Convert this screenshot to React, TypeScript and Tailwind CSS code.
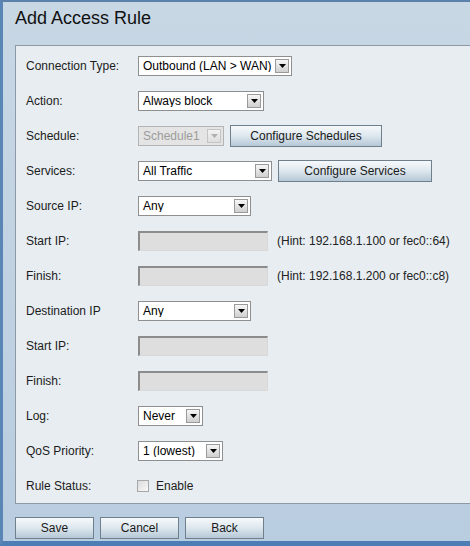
import React from "react";

const font = { fontFamily: '"Liberation Sans", Arial, sans-serif' };

function Arrow({ disabled }: { disabled?: boolean }) {
  return (
    <div
      className={`mr-[2px] flex h-[14px] w-[14px] shrink-0 items-center justify-center border bg-gradient-to-b ${
        disabled ? "border-[#c4c4c4] from-[#f2f2f2] to-[#dedede]" : "border-[#9a9a9a] from-[#f7f7f7] to-[#cfcfcf]"
      }`}
    >
      <svg width="7" height="4" viewBox="0 0 7 4">
        <path d="M0 0h7L3.5 4z" fill={disabled ? "#b0b0b0" : "#000"} />
      </svg>
    </div>
  );
}

function Select({ value, w, disabled }: { value: string; w: string; disabled?: boolean }) {
  return (
    <div
      className={`flex h-[20px] items-center border ${w} ${
        disabled ? "border-[#b4b4b4] bg-[#e4e4e4] text-[#9c9c9c]" : "border-[#8f8f8f] bg-white text-black"
      }`}
    >
      <span className="flex-1 truncate pl-[4px] text-[12px] leading-none">{value}</span>
      <Arrow disabled={disabled} />
    </div>
  );
}

function Button({ label, w }: { label: string; w: string }) {
  return (
    <div
      className={`flex h-[22px] items-center justify-center border border-[#6f7f8c] bg-gradient-to-b from-[#f6f9fb] via-[#dde7ee] to-[#b5c7d6] text-[12px] text-[#1a1a1a] ${w}`}
    >
      {label}
    </div>
  );
}

function IpInput() {
  return (
    <div className="h-[20px] w-[130px] border-t-2 border-l-2 border-r border-b border-t-[#8c8c8c] border-l-[#8c8c8c] border-r-[#d8d8d8] border-b-[#d8d8d8] bg-[#dedede]" />
  );
}

function Row({ label, children }: { label: string; children: React.ReactNode }) {
  return (
    <div className="flex h-[35px] items-center">
      <div className="w-[112px] shrink-0 text-[12px] text-[#1c1c1c]">{label}</div>
      <div className="flex items-center gap-[6px]">{children}</div>
    </div>
  );
}

export default function App() {
  return (
    <div
      style={font}
      className="flex h-[546px] w-[470px] flex-col overflow-hidden border-t-2 border-l-[3px] border-b-[5px] border-t-[#5b80aa] border-l-[#5a86b6] border-b-[#4d7db5] bg-gradient-to-b from-[#c8d7e4] to-[#b9cde0]"
    >
      <h1 className="pl-[12px] pt-[5px] text-[18px] leading-[22px] text-[#111]">Add Access Rule</h1>

      <div className="ml-[12px] mt-[16px] border border-r-0 border-[#8d9aa5] bg-[#e7edf1] pl-[10px] pt-[2px]">
        <Row label="Connection Type:">
          <Select value="Outbound (LAN > WAN)" w="w-[154px]" />
        </Row>
        <Row label="Action:">
          <Select value="Always block" w="w-[126px]" />
        </Row>
        <Row label="Schedule:">
          <Select value="Schedule1" w="w-[86px]" disabled />
          <Button label="Configure Schedules" w="w-[152px]" />
        </Row>
        <Row label="Services:">
          <Select value="All Traffic" w="w-[134px]" />
          <Button label="Configure Services" w="w-[154px]" />
        </Row>
        <Row label="Source IP:">
          <Select value="Any" w="w-[113px]" />
        </Row>
        <Row label="Start IP:">
          <IpInput />
          <span className="ml-[3px] text-[12px] text-[#222]">(Hint: 192.168.1.100 or fec0::64)</span>
        </Row>
        <Row label="Finish:">
          <IpInput />
          <span className="ml-[3px] text-[12px] text-[#222]">(Hint: 192.168.1.200 or fec0::c8)</span>
        </Row>
        <Row label="Destination IP">
          <Select value="Any" w="w-[113px]" />
        </Row>
        <Row label="Start IP:">
          <IpInput />
        </Row>
        <Row label="Finish:">
          <IpInput />
        </Row>
        <Row label="Log:">
          <Select value="Never" w="w-[65px]" />
        </Row>
        <Row label="QoS Priority:">
          <Select value="1 (lowest)" w="w-[85px]" />
        </Row>
        <Row label="Rule Status:">
          <div className="-ml-[1px] h-[12px] w-[12px] border border-[#a8a8a8] bg-gradient-to-br from-[#dcdcdc] to-[#f8f8f8]" />
          <span className="ml-[1px] text-[12px] text-[#1c1c1c]">Enable</span>
        </Row>
      </div>

      <div className="ml-[12px] mt-[13px] flex gap-[6px]">
        <Button label="Save" w="w-[79px]" />
        <Button label="Cancel" w="w-[79px]" />
        <Button label="Back" w="w-[79px]" />
      </div>
    </div>
  );
}
